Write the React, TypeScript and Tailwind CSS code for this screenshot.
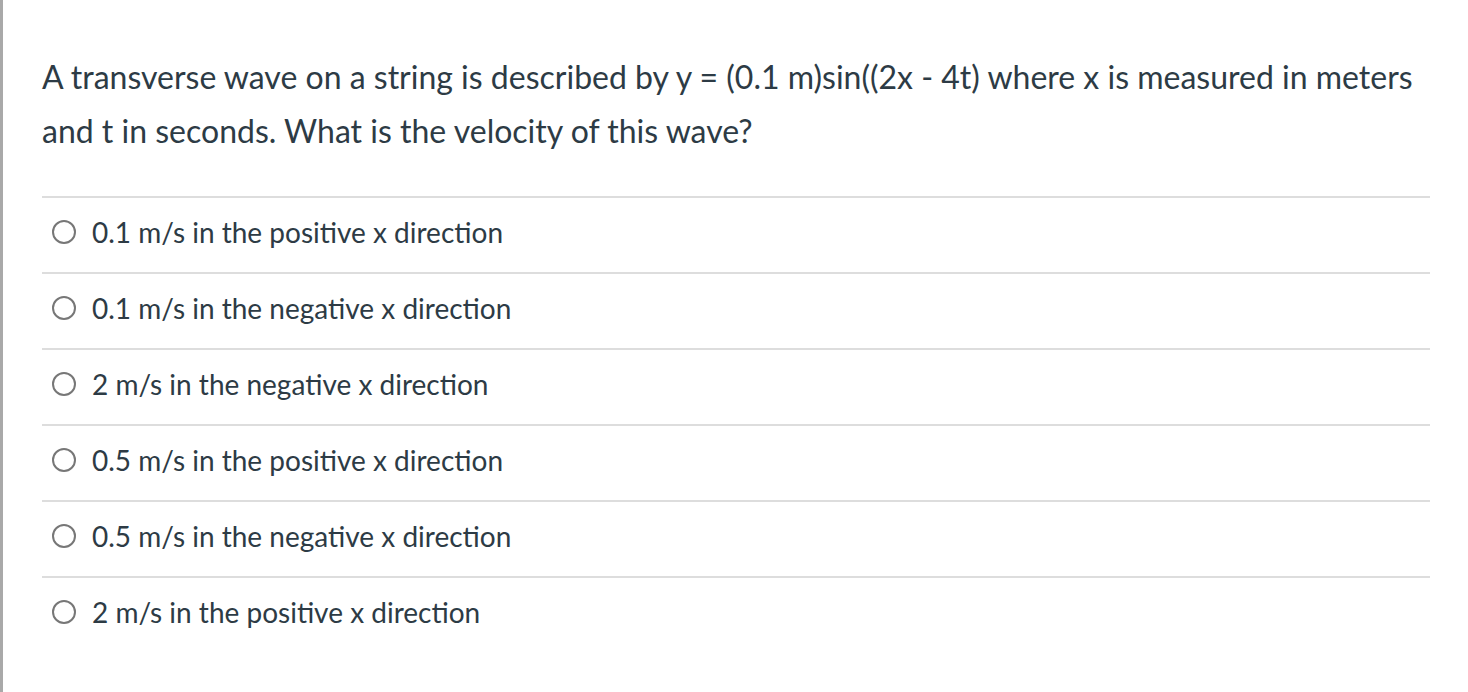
const options = [
  '0.1 m/s in the positive x direction',
  '0.1 m/s in the negative x direction',
  '2 m/s in the negative x direction',
  '0.5 m/s in the positive x direction',
  '0.5 m/s in the negative x direction',
  '2 m/s in the positive x direction',
];

export default function App() {
  return (
    <div className="w-[1468px] h-[692px] bg-white border-l-[3px] border-[#a9a9a9] font-['Lato','Liberation_Sans',sans-serif] text-[#2d3b45]">
      <div className="pl-[39px] pr-[38px] pt-[50px]">
        <p className="text-[32px] leading-[54px]">
          A transverse wave on a string is described by y = (0.1 m)sin((2x - 4t) where x is measured in meters and t in seconds. What is the velocity of this wave?
        </p>
        <div className="mt-[38px]">
          {options.map((o) => (
            <label key={o} className="flex items-center h-[76px] border-t-2 border-[#dddddd] pl-[10px] pb-[6px]">
              <span className="w-[24px] h-[24px] rounded-full border-2 border-[#777777] shrink-0" />
              <span className="ml-[16px] text-[28px]">{o}</span>
            </label>
          ))}
        </div>
      </div>
    </div>
  );
}
